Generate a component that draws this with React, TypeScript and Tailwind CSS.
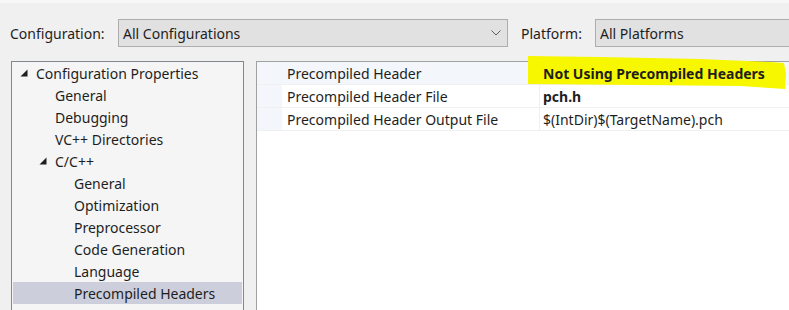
const tree = [
  { label: 'Configuration Properties', level: 0, open: true },
  { label: 'General', level: 1 },
  { label: 'Debugging', level: 1 },
  { label: 'VC++ Directories', level: 1 },
  { label: 'C/C++', level: 1, open: true },
  { label: 'General', level: 2 },
  { label: 'Optimization', level: 2 },
  { label: 'Preprocessor', level: 2 },
  { label: 'Code Generation', level: 2 },
  { label: 'Language', level: 2 },
  { label: 'Precompiled Headers', level: 2, selected: true },
];

const props = [
  { name: 'Precompiled Header', value: 'Not Using Precompiled Headers', bold: true, active: true },
  { name: 'Precompiled Header File', value: 'pch.h', bold: true },
  { name: 'Precompiled Header Output File', value: '$(IntDir)$(TargetName).pch' },
];

function Triangle() {
  return (
    <svg width="8" height="8" viewBox="0 0 8 8" className="shrink-0">
      <path d="M7.5 0.5 L7.5 7.5 L0.5 7.5 Z" fill="#1e1e1e" />
    </svg>
  );
}

function Combo({ text, className }: { text: string; className: string }) {
  return (
    <div className={`shrink-0 h-[28px] bg-[#e1e1e1] border border-[#adadad] flex items-center pl-[4px] pr-[6px] ${className}`}>
      <span className="flex-1">{text}</span>
      <svg width="10" height="6" viewBox="0 0 10 6">
        <path d="M0.5 0.5 L5 5 L9.5 0.5" stroke="#606060" fill="none" strokeWidth="1" />
      </svg>
    </div>
  );
}

export default function App() {
  return (
    <div
      className="relative w-[789px] h-[310px] overflow-hidden bg-[#f0f0f0] text-[14px] text-[#1e1e1e]"
      style={{ fontFamily: '"Noto Sans", "Open Sans", sans-serif' }}
    >
      <div className="h-[3px] bg-[#f7f7f7]" />
      {/* Top section - selectors */}
      <div className="flex items-center pt-[16px] pl-[10px]">
        <span className="shrink-0 w-[108px]">Configuration:</span>
        <Combo text="All Configurations" className="w-[390px]" />
        <span className="shrink-0 ml-[13px] w-[74px]">Platform:</span>
        <Combo text="All Platforms" className="w-[220px]" />
      </div>

      <div className="flex mt-[14px] pl-[11px] gap-[12px]">
        {/* Left section - tree */}
        <div className="shrink-0 w-[233px] h-[260px] bg-[#f5f5f5] border border-[#828790]">
          {tree.map((t, i) => (
            <div
              key={i}
              className={`h-[22px] flex items-center mx-[1px] ${t.selected ? 'bg-[#cccedb]' : ''}`}
            >
              <div
                className={`flex items-center gap-[8px] ${
                  t.level === 0 ? 'pl-[7px]' : t.level === 1 ? (t.open ? 'pl-[26px]' : 'pl-[42px]') : 'pl-[61px]'
                }`}
              >
                {t.open && <Triangle />}
                <span>{t.label}</span>
              </div>
            </div>
          ))}
        </div>

        {/* Right section - property grid */}
        <div className="flex-1 h-[260px] bg-white border border-[#a0a0a0] border-r-0">
          {props.map((p, i) => (
            <div key={i} className="h-[23px] flex border-b border-[#f0f0f0]">
              <div className="w-[25px] bg-[#f3f6fb]" />
              <div className={`w-[257px] pl-[5px] flex items-center ${p.active ? 'bg-[#f3f6fb]' : ''}`}>
                <span className="relative z-10">{p.name}</span>
              </div>
              <div className={`flex-1 border-l border-[#f0f0f0] pl-[3px] flex items-center ${p.active ? 'bg-[#f3f6fb]' : ''}`}>
                <span className={`relative z-10 ${p.bold ? 'font-bold' : ''}`}>{p.value}</span>
              </div>
            </div>
          ))}
        </div>
      </div>

      {/* Highlighter stroke */}
      <svg className="absolute left-0 top-0 pointer-events-none" width="789" height="310">
        <path
          d="M528 56 L600 57 L700 59 L770 62 L784 63 L786 74 L785 89 L740 86 L640 85 L528 84 Z"
          fill="#f7f700"
        />
      </svg>
    </div>
  );
}
